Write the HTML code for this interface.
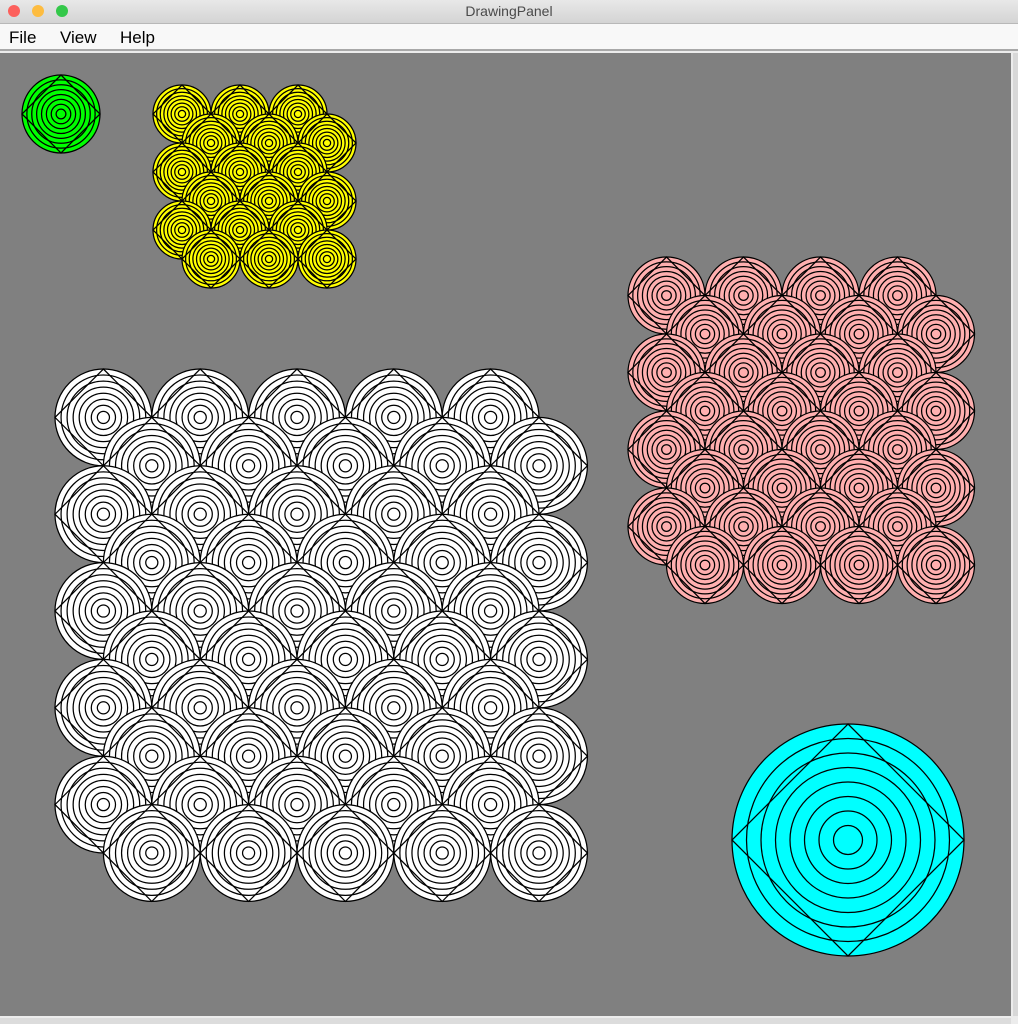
<!DOCTYPE html>
<html><head><style>
body{margin:0;width:1018px;height:1024px;overflow:hidden;background:#ececec;font-family:"Liberation Sans",sans-serif}
.tb{position:absolute;left:0;top:0;width:1018px;height:23px;background:linear-gradient(#e8e8e8,#d4d4d4);border-bottom:1px solid #b8b8b8;text-align:center;font-size:14px;line-height:23px;color:#4a4a4a}
.dot{position:absolute;top:5px;width:12px;height:12px;border-radius:50%}
.mb{position:absolute;left:0;top:24px;width:1018px;height:25px;background:#f8f8f8;border-bottom:2px solid #a8a8a8;font-size:17px;line-height:27px;color:#000}
.mb span{position:absolute}
svg{position:absolute;left:0;top:0}
</style></head><body>
<div class="tb">DrawingPanel
<div class="dot" style="left:8px;background:#fc605c"></div>
<div class="dot" style="left:32px;background:#fdbc40"></div>
<div class="dot" style="left:56px;background:#34c84a"></div></div>
<div class="mb"><span style="left:9px">File</span><span style="left:60px">View</span><span style="left:120px">Help</span></div>
<svg width="1018" height="1024" viewBox="0 0 1018 1024">
<defs>
<g id="t" stroke="#000" stroke-width="1.25">
<circle r=".5" vector-effect="non-scaling-stroke"/>
<g fill="none">
<circle r=".4375" vector-effect="non-scaling-stroke"/>
<circle r=".375" vector-effect="non-scaling-stroke"/>
<circle r=".3125" vector-effect="non-scaling-stroke"/>
<circle r=".25" vector-effect="non-scaling-stroke"/>
<circle r=".1875" vector-effect="non-scaling-stroke"/>
<circle r=".125" vector-effect="non-scaling-stroke"/>
<circle r=".0625" vector-effect="non-scaling-stroke"/>
<path d="M0-.5L.5 0 0 .5-.5 0Z" vector-effect="non-scaling-stroke"/>
</g></g>
</defs>
<rect x="0" y="53" width="1011" height="963" fill="#808080"/>
<rect x="1013" y="53" width="5" height="963" fill="#d8d8d8"/>
<rect x="0" y="1018" width="1011" height="6" fill="#dcdcdc"/>
<g transform="translate(22,75) scale(78)" fill="#00ff00"><use href="#t" x=".5" y=".5"/></g>
<g transform="translate(732,724) scale(232)" fill="#00ffff"><use href="#t" x=".5" y=".5"/></g>
<g transform="translate(153,85) scale(58)" fill="#ffff00">
<use href="#t" x=".5" y=".5"/><use href="#t" x="1.5" y=".5"/><use href="#t" x="2.5" y=".5"/>
<use href="#t" x="1" y="1"/><use href="#t" x="2" y="1"/><use href="#t" x="3" y="1"/>
<use href="#t" x=".5" y="1.5"/><use href="#t" x="1.5" y="1.5"/><use href="#t" x="2.5" y="1.5"/>
<use href="#t" x="1" y="2"/><use href="#t" x="2" y="2"/><use href="#t" x="3" y="2"/>
<use href="#t" x=".5" y="2.5"/><use href="#t" x="1.5" y="2.5"/><use href="#t" x="2.5" y="2.5"/>
<use href="#t" x="1" y="3"/><use href="#t" x="2" y="3"/><use href="#t" x="3" y="3"/>
</g>
<g transform="translate(628,257) scale(77)" fill="#ffafaf">
<use href="#t" x=".5" y=".5"/><use href="#t" x="1.5" y=".5"/><use href="#t" x="2.5" y=".5"/><use href="#t" x="3.5" y=".5"/>
<use href="#t" x="1" y="1"/><use href="#t" x="2" y="1"/><use href="#t" x="3" y="1"/><use href="#t" x="4" y="1"/>
<use href="#t" x=".5" y="1.5"/><use href="#t" x="1.5" y="1.5"/><use href="#t" x="2.5" y="1.5"/><use href="#t" x="3.5" y="1.5"/>
<use href="#t" x="1" y="2"/><use href="#t" x="2" y="2"/><use href="#t" x="3" y="2"/><use href="#t" x="4" y="2"/>
<use href="#t" x=".5" y="2.5"/><use href="#t" x="1.5" y="2.5"/><use href="#t" x="2.5" y="2.5"/><use href="#t" x="3.5" y="2.5"/>
<use href="#t" x="1" y="3"/><use href="#t" x="2" y="3"/><use href="#t" x="3" y="3"/><use href="#t" x="4" y="3"/>
<use href="#t" x=".5" y="3.5"/><use href="#t" x="1.5" y="3.5"/><use href="#t" x="2.5" y="3.5"/><use href="#t" x="3.5" y="3.5"/>
<use href="#t" x="1" y="4"/><use href="#t" x="2" y="4"/><use href="#t" x="3" y="4"/><use href="#t" x="4" y="4"/>
</g>
<g transform="translate(55,369) scale(96.8)" fill="#ffffff">
<use href="#t" x=".5" y=".5"/><use href="#t" x="1.5" y=".5"/><use href="#t" x="2.5" y=".5"/><use href="#t" x="3.5" y=".5"/><use href="#t" x="4.5" y=".5"/>
<use href="#t" x="1" y="1"/><use href="#t" x="2" y="1"/><use href="#t" x="3" y="1"/><use href="#t" x="4" y="1"/><use href="#t" x="5" y="1"/>
<use href="#t" x=".5" y="1.5"/><use href="#t" x="1.5" y="1.5"/><use href="#t" x="2.5" y="1.5"/><use href="#t" x="3.5" y="1.5"/><use href="#t" x="4.5" y="1.5"/>
<use href="#t" x="1" y="2"/><use href="#t" x="2" y="2"/><use href="#t" x="3" y="2"/><use href="#t" x="4" y="2"/><use href="#t" x="5" y="2"/>
<use href="#t" x=".5" y="2.5"/><use href="#t" x="1.5" y="2.5"/><use href="#t" x="2.5" y="2.5"/><use href="#t" x="3.5" y="2.5"/><use href="#t" x="4.5" y="2.5"/>
<use href="#t" x="1" y="3"/><use href="#t" x="2" y="3"/><use href="#t" x="3" y="3"/><use href="#t" x="4" y="3"/><use href="#t" x="5" y="3"/>
<use href="#t" x=".5" y="3.5"/><use href="#t" x="1.5" y="3.5"/><use href="#t" x="2.5" y="3.5"/><use href="#t" x="3.5" y="3.5"/><use href="#t" x="4.5" y="3.5"/>
<use href="#t" x="1" y="4"/><use href="#t" x="2" y="4"/><use href="#t" x="3" y="4"/><use href="#t" x="4" y="4"/><use href="#t" x="5" y="4"/>
<use href="#t" x=".5" y="4.5"/><use href="#t" x="1.5" y="4.5"/><use href="#t" x="2.5" y="4.5"/><use href="#t" x="3.5" y="4.5"/><use href="#t" x="4.5" y="4.5"/>
<use href="#t" x="1" y="5"/><use href="#t" x="2" y="5"/><use href="#t" x="3" y="5"/><use href="#t" x="4" y="5"/><use href="#t" x="5" y="5"/>
</g>
</svg>
</body></html>
